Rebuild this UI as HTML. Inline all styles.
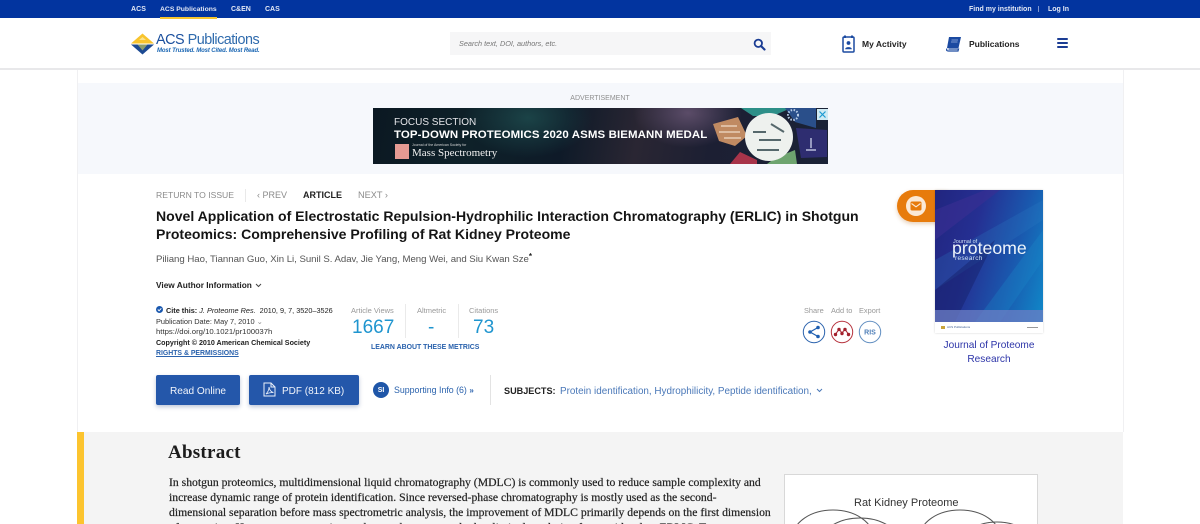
<!DOCTYPE html>
<html lang="en">
<head>
<meta charset="utf-8">
<title>Novel Application of ERLIC in Shotgun Proteomics</title>
<style>
html,body{margin:0;padding:0;background:#fff;overflow:hidden}
#p{position:relative;width:1200px;height:524px;overflow:hidden;background:#fff;font-family:"Liberation Sans",sans-serif;color:#222}
#p div,#p svg{position:absolute}
.t{white-space:nowrap}
.serif{font-family:"Liberation Serif",serif}
</style>
</head>
<body>
<div id="p">
<div style="left:0;top:0;width:1200px;height:18px;background:#02349f"></div>
<div class="t" style="left:131px;top:5px;font-size:7px;line-height:10px;color:#e4e9f5;font-weight:bold;letter-spacing:.1px">ACS</div>
<div class="t" style="left:160px;top:5px;font-size:6.800px;line-height:10px;color:#e4e9f5;font-weight:bold">ACS Publications</div>
<div style="left:160px;top:17px;width:57px;height:2px;background:#f7c630"></div>
<div class="t" style="left:231px;top:5px;font-size:7px;line-height:10px;color:#e4e9f5;font-weight:bold">C&amp;EN</div>
<div class="t" style="left:265px;top:5px;font-size:7px;line-height:10px;color:#e4e9f5;font-weight:bold">CAS</div>
<div class="t" style="left:969px;top:5px;font-size:7px;line-height:10px;color:#e4e9f5;font-weight:bold">Find my institution</div>
<div style="left:1038px;top:6px;width:1px;height:6px;background:#7f96cf"></div>
<div class="t" style="left:1048px;top:5px;font-size:7px;line-height:10px;color:#e4e9f5;font-weight:bold">Log In</div>

<div style="left:0;top:68px;width:1200px;height:2px;background:#e8e8ea"></div>
<svg style="left:131px;top:32px" width="24" height="24" viewBox="0 0 24 24">
<path d="M0 11.500L11.500 1.500L23 11.500Z" fill="#f8c42d"/>
<path d="M0 12.500H23L11.500 22.500Z" fill="#1c4a93"/>
<path d="M6.500 12.500H16.500L11.500 18.500Z" fill="#8b9d6d"/>
<path d="M8 8L11.500 5L15 8Z" fill="#fbe28b"/>
</svg>
<div class="t" style="left:156px;top:31px;font-size:14.400px;line-height:18px;color:#1a4f9d;letter-spacing:-.5px">ACS <span style="color:#2f6bad">Publications</span></div>
<div class="t" style="left:157px;top:47px;font-size:6px;line-height:8px;color:#1a66b3;font-weight:bold;font-style:italic;letter-spacing:-.12px">Most Trusted. Most Cited. Most Read.</div>

<div style="left:450px;top:32px;width:321px;height:23px;background:#f6f6f7"></div>
<div class="t" style="left:459px;top:38px;font-size:7.300px;line-height:11px;color:#767676;font-style:italic">Search text, DOI, authors, etc.</div>
<svg style="left:753px;top:38px" width="13" height="13" viewBox="0 0 13 13"><circle cx="5.300" cy="5.300" r="3.700" fill="none" stroke="#1b3d94" stroke-width="1.800"/><path d="M8 8L11.500 11.500" stroke="#1b3d94" stroke-width="2.200" stroke-linecap="round"/></svg>

<svg style="left:841px;top:35px" width="15" height="18" viewBox="0 0 15 18"><rect x="2" y="2" width="11" height="15" rx="1" fill="none" stroke="#1b4aa1" stroke-width="1.500"/><rect x="3" y="0.500" width="2" height="2.500" fill="#1b4aa1"/><rect x="10" y="0.500" width="2" height="2.500" fill="#1b4aa1"/><circle cx="7.500" cy="8" r="1.900" fill="#1b4aa1"/><path d="M4.200 14.200C4.200 11.500 10.800 11.500 10.800 14.200Z" fill="#1b4aa1"/></svg>
<div class="t" style="left:862px;top:38px;font-size:8.500px;line-height:12px;color:#222;font-weight:bold">My Activity</div>
<svg style="left:945px;top:36px" width="17" height="16" viewBox="0 0 17 16"><path d="M4 1H16L13.500 12H2Z" fill="#1b4aa1"/><path d="M2 12.500C1 14.500 2 15 3.500 15H13L13.500 13H3.500" fill="none" stroke="#1b4aa1" stroke-width="1.200"/><path d="M6.500 4H13M6 6H12.500" stroke="#9db5e3" stroke-width=".8"/></svg>
<div class="t" style="left:969px;top:38px;font-size:8.500px;line-height:12px;color:#222;font-weight:bold">Publications</div>
<div style="left:1057px;top:38px;width:11px;height:2px;background:#1b3d94;border-radius:1px"></div>
<div style="left:1057px;top:42px;width:11px;height:2px;background:#1b3d94;border-radius:1px"></div>
<div style="left:1057px;top:46px;width:11px;height:2px;background:#1b3d94;border-radius:1px"></div>

<div style="left:77px;top:70px;width:1px;height:362px;background:#f0f0f2"></div>
<div style="left:1123px;top:70px;width:1px;height:362px;background:#f0f0f2"></div>
<div style="left:78px;top:83px;width:1045px;height:91px;background:#f6f8fc"></div>
<div class="t" style="left:0;top:94px;width:1200px;text-align:center;font-size:7px;line-height:9px;color:#8f8f8f">ADVERTISEMENT</div>

<div style="left:373px;top:108px;width:455px;height:56px;overflow:hidden;background:linear-gradient(100deg,#0b1822 0%,#0e2129 22%,#0e1a28 42%,#2a2633 58%,#1c1f33 74%,#1a2236 100%)">
<div style="left:90px;top:-30px;width:130px;height:80px;border-radius:50%;background:radial-gradient(ellipse,#1b4347 0%,rgba(20,50,60,0) 70%)"></div>
<div style="left:260px;top:-30px;width:110px;height:70px;border-radius:50%;background:radial-gradient(ellipse,#5b4c68 0%,rgba(60,50,80,0) 70%)"></div>
<div class="t" style="left:21px;top:9px;font-size:10px;line-height:12px;color:#e6e6ea">FOCUS SECTION</div>
<div class="t" style="left:21px;top:21px;font-size:11.450px;line-height:13px;color:#fff;font-weight:bold;letter-spacing:.12px">TOP-DOWN PROTEOMICS 2020 ASMS BIEMANN MEDAL</div>
<div style="left:22px;top:36px;width:14px;height:15px;background:#e59a93"></div>
<div class="t" style="left:39px;top:35px;font-size:3.500px;line-height:5px;color:#d8d8d8">Journal of the American Society for</div>
<div class="t serif" style="left:39px;top:39px;font-size:11px;line-height:13px;color:#f2f2f2">Mass Spectrometry</div>
<svg style="left:340px;top:0" width="115" height="56" viewBox="0 0 115 56">
<path d="M0 16L25 9L34 28L22 38L6 33Z" fill="#c08a62"/>
<path d="M28 0H78L60 8H40Z" fill="#2d8f88"/>
<path d="M72 0H103V20L82 14Z" fill="#2a4f8a"/>
<path d="M83 20L114 22V49L88 50Z" fill="#2e2d70"/>
<path d="M17 56L27 44L44 52L44 56Z" fill="#a8344a"/>
<path d="M54 56L62 50L82 42L84 56Z" fill="#6ea46f"/>
<circle cx="56" cy="29" r="24" fill="#eef1ee"/>
<path d="M40 24H53M46 32H68M58 16L71 24M44 42H66" stroke="#56686c" stroke-width="2"/>
<path d="M98 30V40M93 42H103" stroke="#b8bddb" stroke-width="1.500"/>
<path d="M8 18H24M6 24H27M11 30H28" stroke="#f0dcc9" stroke-width="1.200"/>
<circle cx="80" cy="7" r="5" fill="none" stroke="#b9cde8" stroke-dasharray="1.500 1.500" stroke-width="2"/>
</svg>
<div style="left:444px;top:1px;width:11px;height:11px;background:#cfeaf3"></div>
<svg style="left:446px;top:3px" width="7" height="7" viewBox="0 0 7 7"><path d="M.5 .5L6.500 6.500M6.500 .5L.5 6.500" stroke="#1b9ad1" stroke-width="1.200"/></svg>
</div>

<div class="t" style="left:156px;top:190px;font-size:8.600px;line-height:11px;color:#8b8b8b">RETURN TO ISSUE</div>
<div style="left:245px;top:189px;width:1px;height:13px;background:#e9e9e9"></div>
<div class="t" style="left:257px;top:190px;font-size:9px;line-height:11px;color:#8b8b8b">&#8249; PREV</div>
<div class="t" style="left:303px;top:190px;font-size:9px;line-height:11px;color:#222;font-weight:bold">ARTICLE</div>
<div class="t" style="left:358px;top:190px;font-size:9.200px;line-height:11px;color:#8b8b8b">NEXT &#8250;</div>

<div class="t" style="left:156px;top:207px;font-size:14.060px;line-height:18px;color:#151515;font-weight:bold">Novel Application of Electrostatic Repulsion-Hydrophilic Interaction Chromatography (ERLIC) in Shotgun</div>
<div class="t" style="left:156px;top:225px;font-size:14.060px;line-height:18px;color:#151515;font-weight:bold">Proteomics: Comprehensive Profiling of Rat Kidney Proteome</div>
<div class="t" style="left:156px;top:250px;font-size:9.650px;line-height:13px;color:#555;letter-spacing:-.03px">Piliang Hao, Tiannan Guo, Xin Li, Sunil S. Adav, Jie Yang, Meng Wei, and Siu Kwan Sze<span style="color:#222;font-weight:bold;font-size:8px;vertical-align:3px">*</span></div>
<div class="t" style="left:156px;top:280px;font-size:8.300px;line-height:11px;color:#222;font-weight:bold">View Author Information</div>
<svg style="left:255px;top:283px" width="7" height="5" viewBox="0 0 7 5"><path d="M1 1L3.500 3.500L6 1" fill="none" stroke="#444" stroke-width="1"/></svg>

<svg style="left:156px;top:306px" width="7" height="7" viewBox="0 0 7 7"><circle cx="3.500" cy="3.500" r="3.500" fill="#1a58ae"/><path d="M1.800 3.500L3.100 4.800L5.300 2.300" fill="none" stroke="#fff" stroke-width=".9"/></svg>
<div class="t" style="left:166px;top:306px;font-size:7.300px;line-height:10px;color:#222"><b>Cite this:</b> <i>J. Proteome Res.</i> &nbsp;2010, 9, 7, 3520&#8211;3526</div>
<div class="t" style="left:156px;top:317px;font-size:7.400px;line-height:10px;color:#333">Publication Date: May 7, 2010 <span style="color:#888">&#8964;</span></div>
<div class="t" style="left:156px;top:327px;font-size:7.750px;line-height:10px;color:#333">https://doi.org/10.1021/pr100037h</div>
<div class="t" style="left:156px;top:338px;font-size:7.150px;line-height:10px;color:#222;font-weight:bold">Copyright © 2010 American Chemical Society</div>
<div class="t" style="left:156px;top:349px;font-size:6.900px;line-height:10px;color:#2a62ad;font-weight:bold;text-decoration:underline">RIGHTS &amp; PERMISSIONS</div>

<div class="t" style="left:351px;top:306px;font-size:7.500px;line-height:10px;color:#999">Article Views</div>
<div class="t" style="left:417px;top:306px;font-size:7.500px;line-height:10px;color:#999">Altmetric</div>
<div class="t" style="left:469px;top:306px;font-size:7.500px;line-height:10px;color:#999">Citations</div>
<div style="left:405px;top:304px;width:1px;height:34px;background:#eaeaea"></div>
<div style="left:458px;top:304px;width:1px;height:34px;background:#eaeaea"></div>
<div class="t" style="left:352px;top:316px;font-size:19px;line-height:24px;color:#1f95cf">1667</div>
<div class="t" style="left:428px;top:316px;font-size:19px;line-height:24px;color:#1f95cf">-</div>
<div class="t" style="left:473px;top:316px;font-size:19px;line-height:24px;color:#1f95cf">73</div>
<div class="t" style="left:371px;top:343px;font-size:6.950px;line-height:10px;color:#2a62ad;font-weight:bold">LEARN ABOUT THESE METRICS</div>

<div style="left:156px;top:375px;width:84px;height:30px;background:#2457aa;border-radius:2px;box-shadow:0 2px 4px rgba(40,70,130,.3)"></div>
<div class="t" style="left:156px;top:385px;width:84px;text-align:center;font-size:10.100px;line-height:13px;color:#f2f5fb">Read Online</div>
<div style="left:249px;top:375px;width:110px;height:30px;background:#2457aa;border-radius:2px;box-shadow:0 2px 4px rgba(40,70,130,.3)"></div>
<svg style="left:263px;top:382px" width="13" height="15" viewBox="0 0 13 15"><path d="M1 1H8L12 5V14H1Z M8 1V5H12" fill="none" stroke="#eaf0fa" stroke-width="1"/><path d="M3 12C5 10 6 7 6 5C6.500 8 8 10 10.500 10.500C7.500 10.500 5 11 3 12Z" fill="none" stroke="#eaf0fa" stroke-width=".8"/></svg>
<div class="t" style="left:282px;top:385px;font-size:10px;line-height:13px;color:#f2f5fb">PDF (812 KB)</div>
<div style="left:373px;top:382px;width:16px;height:16px;border-radius:50%;background:#1f56a8"></div>
<div class="t" style="left:373px;top:386px;width:16px;text-align:center;font-size:7px;line-height:9px;color:#fff;font-weight:bold">SI</div>
<div class="t" style="left:394px;top:384px;font-size:8.800px;line-height:12px;color:#2a62ad">Supporting Info (6) <b style="font-size:8px">&#187;</b></div>
<div style="left:490px;top:375px;width:1px;height:30px;background:#e3e3e3"></div>
<div class="t" style="left:504px;top:385px;font-size:9.100px;line-height:13px;color:#222;font-weight:bold">SUBJECTS:</div>
<div class="t" style="left:560px;top:385px;font-size:9.900px;line-height:13px;color:#4a78b8">Protein identification, Hydrophilicity, Peptide identification,</div>
<svg style="left:816px;top:388px" width="7" height="5" viewBox="0 0 7 5"><path d="M1 1L3.500 3.500L6 1" fill="none" stroke="#4a78b8" stroke-width="1"/></svg>

<div class="t" style="left:804px;top:306px;font-size:7.400px;line-height:10px;color:#999">Share</div>
<div class="t" style="left:831px;top:306px;font-size:7.400px;line-height:10px;color:#999">Add to</div>
<div class="t" style="left:859px;top:306px;font-size:7.400px;line-height:10px;color:#999">Export</div>
<svg style="left:802px;top:320px" width="81" height="24" viewBox="0 0 81 24">
<circle cx="12" cy="12" r="10.700" fill="#fff" stroke="#2a62ad" stroke-width="1"/>
<circle cx="40" cy="12" r="10.700" fill="#fff" stroke="#b5303b" stroke-width="1"/>
<circle cx="68" cy="12" r="10.700" fill="#fff" stroke="#5f8dc0" stroke-width="1"/>
<path d="M16 7.500L8 12L16 16.500" fill="none" stroke="#1e5eb0" stroke-width="1.200"/>
<circle cx="16" cy="7.500" r="1.800" fill="#1e5eb0"/><circle cx="8" cy="12" r="1.800" fill="#1e5eb0"/><circle cx="16" cy="16.500" r="1.800" fill="#1e5eb0"/>
<path d="M33.500 14.500L37 9L40 13L43 9L46.500 14.500" fill="none" stroke="#a3202c" stroke-width="1"/>
<circle cx="33.500" cy="14.500" r="1.700" fill="#a3202c"/><circle cx="37" cy="9.500" r="1.700" fill="#a3202c"/><circle cx="40" cy="13.500" r="1.700" fill="#a3202c"/><circle cx="43" cy="9.500" r="1.700" fill="#a3202c"/><circle cx="46.500" cy="14.500" r="1.700" fill="#a3202c"/>
<text x="68" y="14.500" text-anchor="middle" font-family="Liberation Sans" font-size="7" font-weight="bold" fill="#4f7fb8">RIS</text>
</svg>

<div style="left:897px;top:190px;width:50px;height:32px;background:#e77b0c;border-radius:16px 0 0 16px;box-shadow:0 2px 4px rgba(180,100,20,.3)"></div>
<div style="left:906px;top:196px;width:20px;height:20px;border-radius:50%;background:#fbe9d6"></div>
<svg style="left:910px;top:201px" width="12" height="10" viewBox="0 0 12 10"><rect x=".5" y=".5" width="11" height="9" rx="1.500" fill="#e77b0c"/><path d="M1.500 2.500L6 5.800L10.500 2.500" fill="none" stroke="#fbe9d6" stroke-width="1.100"/></svg>

<div style="left:935px;top:190px;width:108px;height:143px;background:#fff;box-shadow:0 0 2px rgba(0,0,0,.18)"></div>
<div style="left:935px;top:190px;width:108px;height:132px;overflow:hidden;background:linear-gradient(105deg,#21257f 0%,#252f92 35%,#1a58ae 68%,#1089c9 100%)">
<svg style="left:0;top:0" width="108" height="132" viewBox="0 0 108 132">
<path d="M0 20L50 0H65L0 50Z" fill="#3b2e92" opacity=".6"/>
<path d="M0 70L108 10V30L0 100Z" fill="#2c7ac5" opacity=".25"/>
<path d="M108 40L40 132H65L108 70Z" fill="#1c8ccb" opacity=".3"/>
<path d="M0 100L60 50L20 132H0Z" fill="#16226b" opacity=".5"/>
</svg>
<div class="t" style="left:18px;top:49px;font-size:5.500px;line-height:7px;color:#cfe2f5">Journal of</div>
<div class="t" style="left:17px;top:48px;font-size:17.700px;line-height:20px;color:#eef5fb">proteome</div>
<div class="t" style="left:20px;top:65px;font-size:6.500px;line-height:8px;color:#cfe2f5;letter-spacing:.3px">research</div>
<div style="left:0;top:120px;width:108px;height:12px;background:#6c7fc4;opacity:.75"></div>
</div>
<div style="left:941px;top:326px;width:4px;height:3px;background:#c9a43a"></div>
<div class="t" style="left:947px;top:325px;font-size:3px;line-height:4px;color:#3a5a90">ACS Publications</div>
<div style="left:1027px;top:327px;width:11px;height:1px;background:#999"></div>
<div style="left:935px;top:339px;width:108px;text-align:center;font-size:10.100px;line-height:14px;color:#2c34a8">Journal of Proteome<br>Research</div>

<div style="left:78px;top:432px;width:1045px;height:92px;background:#f4f4f4"></div>
<div style="left:77px;top:432px;width:7px;height:92px;background:#fcc42e"></div>
<div class="t serif" style="left:168px;top:442px;font-size:19px;line-height:21px;color:#1c1c1c;font-weight:bold;letter-spacing:.25px">Abstract</div>
<div style="left:169px;top:475px;width:610px;height:49px;overflow:hidden">
<div class="t serif" style="left:0;top:0;font-size:11.700px;line-height:15px;color:#222;-webkit-text-stroke:.2px #222">In shotgun proteomics, multidimensional liquid chromatography (MDLC) is commonly used to reduce sample complexity and<br>increase dynamic range of protein identification. Since reversed-phase chromatography is mostly used as the second-<br>dimensional separation before mass spectrometric analysis, the improvement of MDLC primarily depends on the first dimension<br>of separation. However, strong cation exchange chromatography has limited resolution for peptides than ERLIC. Ten</div>
</div>

<div style="left:784px;top:474px;width:252px;height:50px;background:#fff;border:1px solid #d8d8d8;border-bottom:0"></div>
<div class="t" style="left:854px;top:496px;font-size:11px;line-height:14px;color:#333">Rat Kidney Proteome</div>
<svg style="left:785px;top:505px" width="252" height="19" viewBox="0 0 252 19">
<ellipse cx="48" cy="32" rx="40" ry="27" fill="none" stroke="#555" stroke-width="1"/>
<ellipse cx="75" cy="42" rx="42" ry="29" fill="none" stroke="#555" stroke-width="1"/>
<ellipse cx="175" cy="32" rx="40" ry="27" fill="none" stroke="#555" stroke-width="1"/>
<ellipse cx="212" cy="46" rx="40" ry="29" fill="none" stroke="#555" stroke-width="1"/>
</svg>
</div>
</body>
</html>
